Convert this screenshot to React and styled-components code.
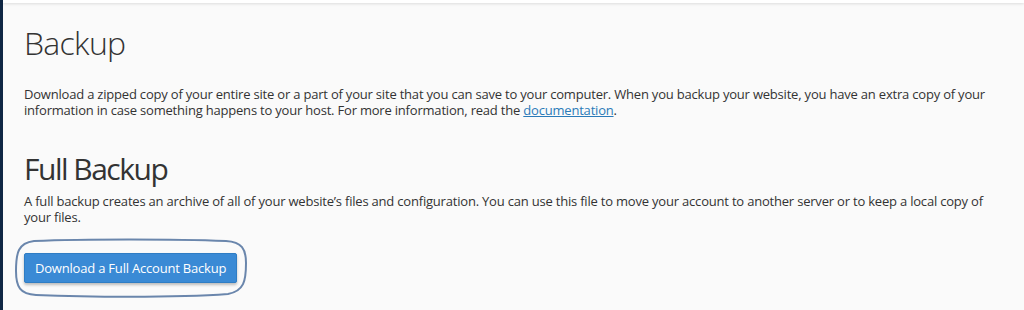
import React from "react";
import styled, { createGlobalStyle } from "styled-components";

const Global = createGlobalStyle`
  html, body { margin: 0; padding: 0; background: #fafafa; }
  body { font-family: "Open Sans", "Liberation Sans", sans-serif; color: #333; }
`;

const Page = styled.div`
  display: flex;
  min-height: 310px;
  background: #fafafa;
`;

const Stripe = styled.div`
  width: 3px;
  flex: none;
  background: #0f2744;
`;

const Main = styled.div`
  flex: 1;
  display: flex;
  flex-direction: column;
`;

const TopBar = styled.div`
  height: 3px;
  background: #ffffff;
  box-shadow: 0 1px 3px rgba(0, 0, 0, 0.12);
`;

const Content = styled.div`
  padding: 0 21px 0 21px;
  max-width: 980px;
`;

const Title = styled.h1`
  margin: 18px 0 0;
  font-size: 32px;
  line-height: 44px;
  font-weight: 300;
  letter-spacing: -0.7px;
  color: #333;
`;

const Text = styled.p`
  margin: ${(p) => p.$mt || 0}px 0 0;
  font-size: 13px;
  line-height: 16px;
  letter-spacing: -0.2px;
  color: #333;
`;

const Link = styled.a`
  color: #2a7ab8;
  text-decoration: underline;
`;

const SubTitle = styled.h2`
  margin: 31px 0 0;
  font-size: 30px;
  line-height: 40px;
  font-weight: 400;
  letter-spacing: -1.5px;
  color: #333;
`;

const ButtonWrap = styled.div`
  position: relative;
  display: inline-block;
  margin-top: 28px;
`;

const Button = styled.button`
  display: block;
  height: 30px;
  padding: 0 10px;
  border: 1px solid #2f7dc4;
  border-radius: 2px;
  background: #3a8ad5;
  color: #fff;
  font-family: "Open Sans", "Liberation Sans", sans-serif;
  font-size: 13px;
  letter-spacing: -0.2px;
  box-shadow: 0 2px 3px rgba(0, 0, 0, 0.25);
`;

const Annotation = styled.svg`
  position: absolute;
  left: -10px;
  top: -14px;
  width: 234px;
  height: 59px;
  overflow: visible;
  pointer-events: none;
`;

export default function App() {
  return (
    <>
      <Global />
      <Page>
        <Stripe />
        <Main>
          <TopBar />
          <Content>
            <Title>Backup</Title>
            <Text $mt={21}>
              Download a zipped copy of your entire site or a part of your site that you can save to your computer. When you backup your website, you have an extra copy of your information in case something happens to your host. For more information, read the{" "}
              <Link href="#">documentation</Link>.
            </Text>
            <SubTitle>Full Backup</SubTitle>
            <Text $mt={4}>
              A full backup creates an archive of all of your website’s files and configuration. You can use this file to move your account to another server or to keep a local copy of your files.
            </Text>
            <ButtonWrap>
              <Button>Download a Full Account Backup</Button>
              <Annotation viewBox="0 0 234 59">
                <path
                  d="M20 2 C70 0 160 0 212 2 C228 3 232 10 232 24 C232 42 230 52 214 55 C160 59 70 58 22 56 C6 55 2 48 2 32 C2 14 4 4 20 2 Z"
                  fill="none"
                  stroke="#6a86ac"
                  strokeWidth="2"
                />
              </Annotation>
            </ButtonWrap>
          </Content>
        </Main>
      </Page>
    </>
  );
}
